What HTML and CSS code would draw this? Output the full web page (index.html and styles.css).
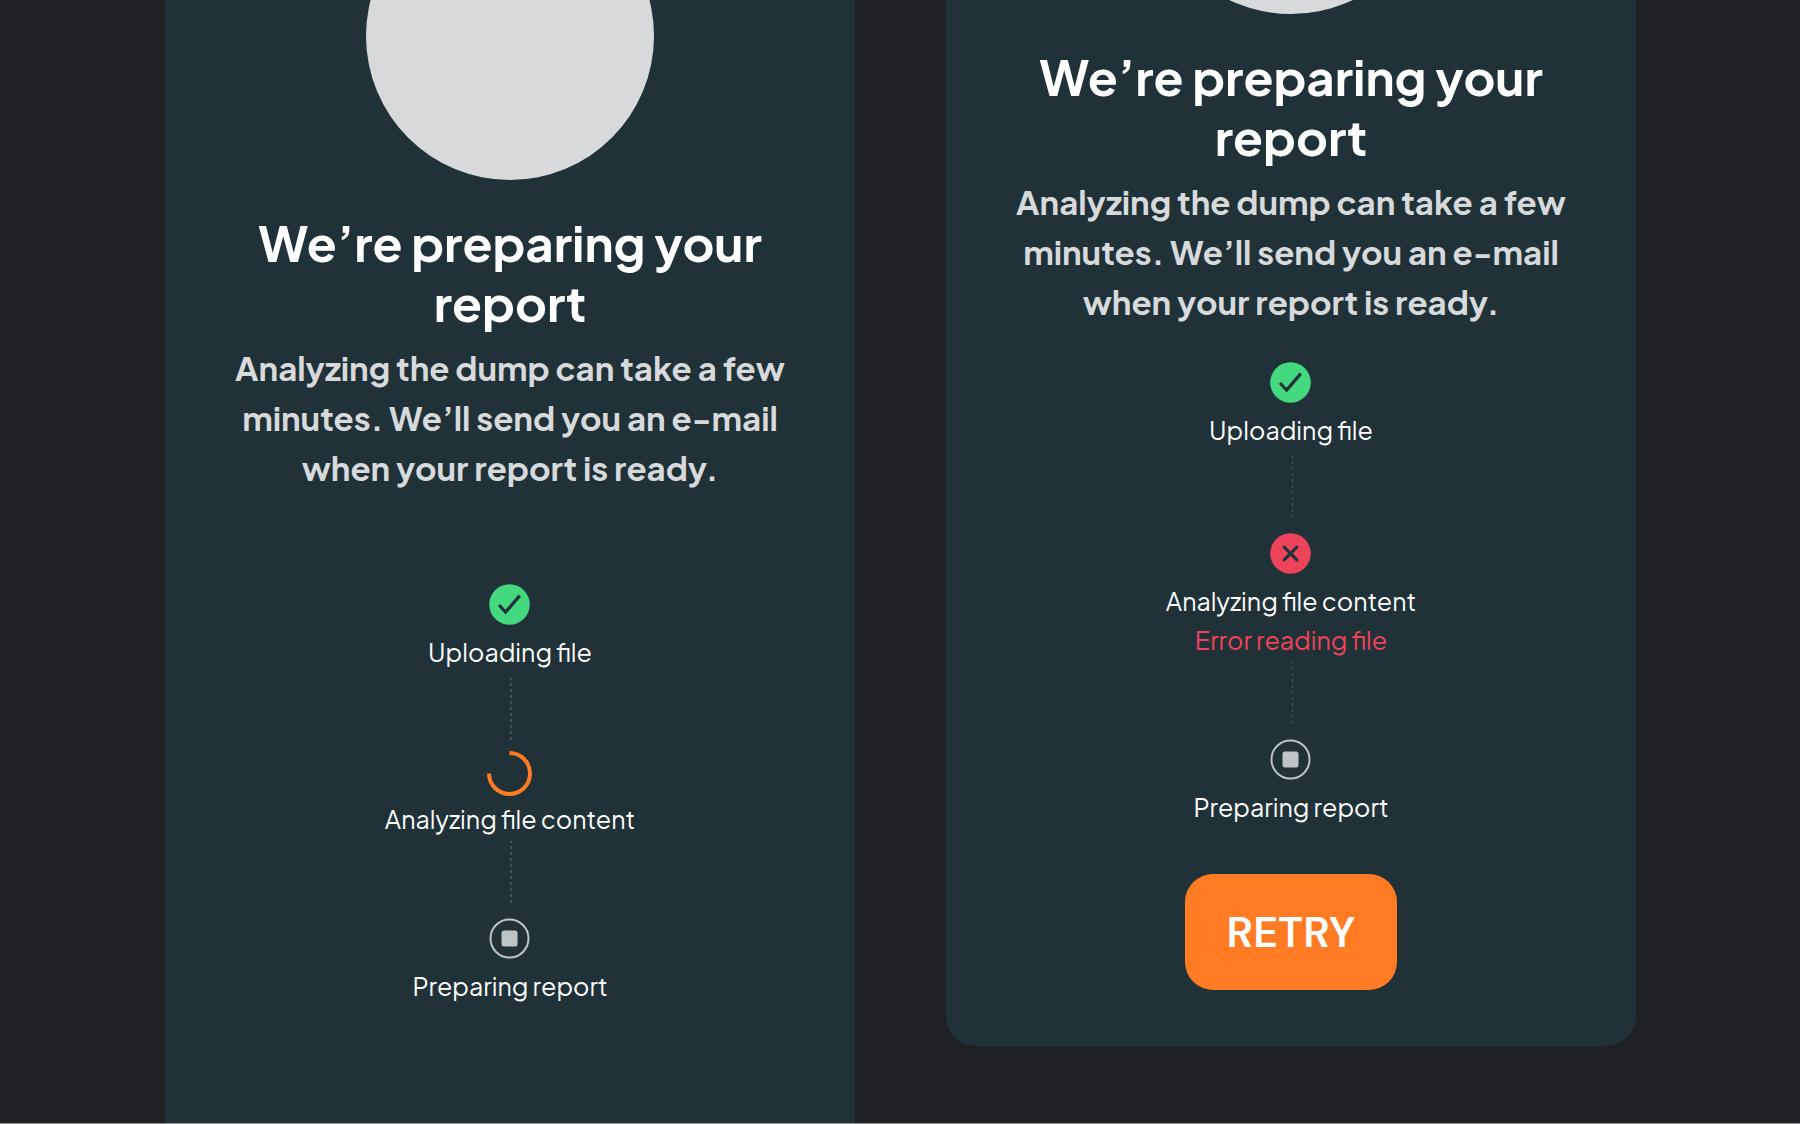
FILE: index.html
```
<!DOCTYPE html>
<html lang="en">
<head>
  <meta charset="UTF-8">
  <meta name="viewport" content="width=device-width, initial-scale=1.0">
  <title>Preparing your report</title>
  <link rel="stylesheet" href="styles.css">
</head>
<body>

  <main class="board">

    <!-- in progress -->
    <section class="card card-progress">
      <div class="picture"></div>
      <h1>We’re preparing your report</h1>
      <p class="intro">Analyzing the dump can take a few minutes. We’ll send you an e-mail when your report is ready.</p>

      <ol class="steps">
        <li class="step">
          <svg class="icon" viewBox="0 0 41 41" aria-hidden="true">
            <circle cx="20.5" cy="20.5" r="20.3" fill="#44d97e"/>
            <path d="M10 21L16.6 28L30.8 11.6" fill="none" stroke="#203238" stroke-width="3.2"/>
          </svg>
          <span class="label">Uploading file</span>
        </li>
        <li class="step">
          <svg class="icon spinner" viewBox="0 0 45 45" aria-hidden="true">
            <path d="M22.5 2A20.5 20.5 0 1 1 2 22.5" fill="none" stroke="#ff7b24" stroke-width="4"/>
          </svg>
          <span class="label">Analyzing file content</span>
        </li>
        <li class="step step-last">
          <svg class="icon" viewBox="0 0 41 41" aria-hidden="true">
            <circle cx="20.5" cy="20.5" r="19" fill="none" stroke="#bcc4c6" stroke-width="2"/>
            <rect x="12.5" y="12.5" width="16" height="16" rx="2.5" fill="#bcc4c6"/>
          </svg>
          <span class="label">Preparing report</span>
        </li>
      </ol>
    </section>

    <!-- failed -->
    <section class="card card-error">
      <div class="picture"></div>
      <h1>We’re preparing your report</h1>
      <p class="intro">Analyzing the dump can take a few minutes. We’ll send you an e-mail when your report is ready.</p>

      <ol class="steps">
        <li class="step">
          <svg class="icon" viewBox="0 0 41 41" aria-hidden="true">
            <circle cx="20.5" cy="20.5" r="20.3" fill="#44d97e"/>
            <path d="M10 21L16.6 28L30.8 11.6" fill="none" stroke="#203238" stroke-width="3.2"/>
          </svg>
          <span class="label">Uploading file</span>
        </li>
        <li class="step">
          <svg class="icon" viewBox="0 0 41 41" aria-hidden="true">
            <circle cx="20.5" cy="20.5" r="20.3" fill="#ee445b"/>
            <path d="M14.2 14.2L26.8 26.8M26.8 14.2L14.2 26.8" fill="none" stroke="#203238" stroke-width="3.2" stroke-linecap="round"/>
          </svg>
          <span class="label">Analyzing file content</span>
          <span class="label error">Error reading file</span>
        </li>
        <li class="step step-last">
          <svg class="icon" viewBox="0 0 41 41" aria-hidden="true">
            <circle cx="20.5" cy="20.5" r="19" fill="none" stroke="#bcc4c6" stroke-width="2"/>
            <rect x="12.5" y="12.5" width="16" height="16" rx="2.5" fill="#bcc4c6"/>
          </svg>
          <span class="label">Preparing report</span>
        </li>
      </ol>

      <button type="button" class="retry">RETRY</button>
    </section>

  </main>

</body>
</html>
```
FILE: styles.css
```
:root {
  --bg-color: #202125;
  --card-bg: #203238;
  --text-color: #ffffff;
  --muted: #d8d9db;
  --line: #455459;
  --accent: #ff7b24;
  --danger: #ee445b;
}

* {
  box-sizing: border-box;
}

body {
  margin: 0;
  font-family: 'Plus Jakarta Sans', Inter, sans-serif;
  background-color: var(--bg-color);
  color: var(--text-color);
}

.board {
  display: grid;
  grid-template-columns: 1fr 1fr;
  gap: 91px;
  height: 100vh;
  padding: 0 164px 0 165px;
  overflow: hidden;
  border-bottom: 1px solid #909294;
}

.card {
  display: flex;
  flex-direction: column;
  align-items: center;
  padding: 64px 56px 56px;
  background: var(--card-bg);
  border-radius: 30px;
  text-align: center;
}

/* both cards start above the top edge of the board */
.card-progress {
  margin-top: -172px;
  margin-bottom: -40px;
}

.card-error {
  align-self: start;
  margin-top: -338px;
}

.picture {
  flex: none;
  width: 288px;
  height: 288px;
  border-radius: 50%;
  background: var(--muted);
}

h1 {
  max-width: 560px;
  margin: 32px 0 11px;
  font-size: 49px;
  font-weight: 700;
  line-height: 60px;
}

.intro {
  max-width: 564px;
  margin: 0;
  color: var(--muted);
  font-size: 33px;
  font-weight: 700;
  line-height: 50px;
}

.steps {
  display: flex;
  flex-direction: column;
  margin: 35px 0 47px;
  padding: 0;
  list-style: none;
}

.card-progress .steps {
  margin-top: 91px;
}

.step {
  display: flex;
  flex-direction: column;
  align-items: center;
}

/* dashed connector between two steps */
.step + .step::before {
  content: "";
  width: 1px;
  height: 63px;
  margin: 6px 0 14px 3px;
  background: repeating-linear-gradient(var(--line) 0 2px, transparent 2px 5px, var(--line) 5px 6px);
}

.card-progress .step + .step::before {
  width: 2px;
  margin-left: 2px;
}

.step + .step-last::before {
  margin-top: 2px;
}

.icon {
  width: 41px;
  height: 41px;
  margin-bottom: 8px;
}

.spinner {
  width: 45px;
  height: 45px;
  margin: -4px 0 4px;
}

.label {
  font-size: 25px;
  font-weight: 400;
  line-height: 39px;
}

.error {
  color: var(--danger);
}

.retry {
  padding: 28px 42px;
  border: none;
  border-radius: 28px;
  background: var(--accent);
  color: var(--text-color);
  font-family: 'DM Sans', 'Open Sans', sans-serif;
  font-size: 43px;
  font-weight: 600;
  line-height: 60px;
  cursor: pointer;
}
```
